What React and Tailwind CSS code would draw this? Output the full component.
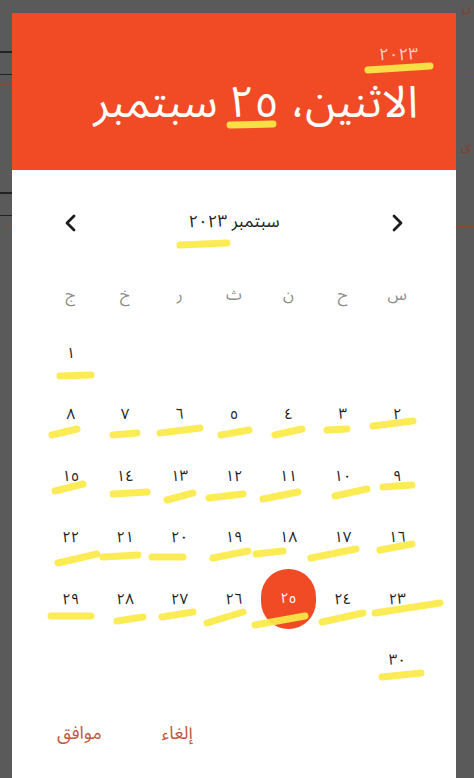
import React from 'react';

const digits = '٠١٢٣٤٥٦٧٨٩';
const ar = (n) => String(n).replace(/\d/g, (d) => digits[d]);

const weekdays = ['س', 'ح', 'ن', 'ث', 'ر', 'خ', 'ج'];

// September 2023 starts on Friday (last column in an RTL week that begins on Saturday)
const buildWeeks = () => {
  const cells = [null, null, null, null, null, null];
  for (let d = 1; d <= 30; d++) cells.push(d);
  while (cells.length % 7) cells.push(null);
  const weeks = [];
  for (let i = 0; i < cells.length; i += 7) weeks.push(cells.slice(i, i + 7));
  return weeks;
};

// highlighter strokes drawn over the screenshot
const marks = [
  [368, 70, 430, 66],
  [230, 125, 273, 124],
  [180, 245, 227, 243],
  [60, 376, 91, 375],
  [52, 435, 77, 429],
  [113, 435, 137, 433],
  [160, 433, 200, 428],
  [221, 435, 249, 430],
  [275, 435, 302, 429],
  [327, 430, 347, 429],
  [373, 426, 413, 421],
  [55, 491, 83, 484],
  [113, 494, 147, 492],
  [167, 500, 193, 493],
  [209, 498, 243, 494],
  [263, 499, 298, 492],
  [335, 496, 367, 489],
  [383, 487, 412, 485],
  [58, 563, 97, 554],
  [103, 557, 138, 555],
  [152, 557, 183, 557],
  [213, 558, 248, 551],
  [256, 554, 283, 551],
  [311, 558, 356, 549],
  [380, 550, 412, 544],
  [51, 616, 91, 616],
  [117, 621, 143, 617],
  [162, 617, 193, 612],
  [207, 623, 243, 612],
  [255, 625, 305, 616],
  [322, 622, 363, 613],
  [375, 613, 440, 603],
  [382, 677, 421, 673],
];

const Chevron = ({ dir }) => (
  <svg width="16" height="18" viewBox="0 0 16 18" fill="none">
    <path
      d={dir === 'left' ? 'M11 2L4 9l7 7' : 'M5 2l7 7-7 7'}
      stroke="#1c1c1c"
      strokeWidth="2.8"
      strokeLinecap="round"
      strokeLinejoin="round"
    />
  </svg>
);

const App = () => {
  const weeks = buildWeeks();
  const font = { fontFamily: '"Noto Sans Arabic", "Noto Naskh Arabic", "DejaVu Sans", sans-serif' };

  return (
    <div className="relative w-[474px] h-[778px] overflow-hidden bg-[#5a5a5a] pt-[13px] pl-[12px] pr-[18px]" style={font}>
      {/* bits of the page behind the dialog */}
      <div className="absolute left-0 top-[51px] w-[12px] h-[2px] bg-[#222]" />
      <div className="absolute left-0 top-[74px] w-[12px] h-[1px] bg-[#222]" />
      <div className="absolute left-0 top-[84px] w-[12px] h-[1px] bg-[#8a4a3a]" />
      <div className="absolute left-0 top-[192px] w-[12px] h-[2px] bg-[#222]" />
      <div className="absolute left-0 top-[215px] w-[12px] h-[1px] bg-[#222]" />
      <div className="absolute left-0 top-[225px] w-[12px] h-[1px] bg-[#8a4a3a]" />
      <div className="absolute right-0 top-[75px] w-[18px] h-[1px] bg-[#8a4a3a]" />
      <div className="absolute right-0 top-[226px] w-[18px] h-[1px] bg-[#8a4a3a]" />
      <div className="absolute right-[3px] top-0 text-[13px] leading-[14px] text-[#8a3a2a]">ن</div>
      <div className="absolute right-[3px] top-[138px] text-[13px] leading-[16px] text-[#8a3a2a]">ى</div>

      <div dir="rtl" className="relative h-full bg-white">
        <div className="h-[157px] bg-[#f04b25] pt-[30px] pr-[38px] text-white">
          <div className="text-[17px] leading-[24px] text-white/75">{ar(2023)}</div>
          <div className="mt-[10px] text-[44px] leading-[52px]">الاثنين، {ar(25)} سبتمبر</div>
        </div>

        <div className="px-[31.5px] pt-[20px]">
          <div className="flex h-[66px] items-center">
            <div className="flex w-[54.5px] justify-center">
              <Chevron dir="right" />
            </div>
            <div className="flex-1 text-center text-[17px] text-[#222]">سبتمبر {ar(2023)}</div>
            <div className="flex w-[54.5px] justify-center">
              <Chevron dir="left" />
            </div>
          </div>

          <div className="mt-[12px] grid h-[54px] grid-cols-7 items-center">
            {weekdays.map((w) => (
              <div key={w} className="text-center text-[16px] text-[#8c8c8c]">
                {w}
              </div>
            ))}
          </div>

          {weeks.map((week, i) => (
            <div key={i} className="grid h-[61.5px] grid-cols-7 items-center">
              {week.map((d, j) => (
                <div key={j} className="flex justify-center">
                  {d === 25 ? (
                    <div className="flex h-[60px] w-[60px] items-center justify-center rounded-full bg-[#f04b25] text-[14px] text-white">
                      {ar(d)}
                    </div>
                  ) : (
                    <span className="text-[15px] text-[#1e1e1e]">{d ? ar(d) : ''}</span>
                  )}
                </div>
              ))}
            </div>
          ))}
        </div>

        <div className="flex h-[84px] items-center justify-end gap-[60px] pl-[45px] text-[18px] text-[#c2583d]">
          <span>إلغاء</span>
          <span>موافق</span>
        </div>
      </div>

      <svg className="pointer-events-none absolute inset-0" width="474" height="778">
        {marks.map(([x1, y1, x2, y2], i) => (
          <line
            key={i}
            x1={x1}
            y1={y1}
            x2={x2}
            y2={y2}
            stroke="#fbea48"
            strokeOpacity="0.92"
            strokeWidth="7"
            strokeLinecap="round"
          />
        ))}
      </svg>
    </div>
  );
};

export default App;
